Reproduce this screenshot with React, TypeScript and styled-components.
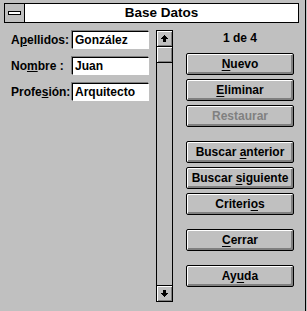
import React from "react";
import styled, { createGlobalStyle } from "styled-components";

const Global = createGlobalStyle`
  html, body { margin: 0; padding: 0; background: #c0c0c0; }
  body { font-family: "Liberation Sans", Arial, sans-serif; }
  * { box-sizing: border-box; }
`;

const Window = styled.div`
  width: 306px;
  height: 311px;
  background: #c0c0c0;
  border-right: 1px solid #000;
  display: flex;
  flex-direction: column;
  font-weight: bold;
  font-size: 12px;
  color: #000;
`;

const TitleBar = styled.div`
  margin: 3px 0 0 4px;
  width: 295px;
  height: 20px;
  border: 1px solid #000;
  display: flex;
`;

const SysMenu = styled.div`
  width: 20px;
  border-right: 1px solid #000;
  background: #c0c0c0;
  display: flex;
  align-items: center;
  justify-content: center;
`;

const SysDash = styled.div`
  width: 13px;
  height: 4px;
  background: #fff;
  border: 1px solid #000;
  margin-left: -1px;
`;

const Caption = styled.div`
  flex: 1;
  background: #fff;
  text-align: center;
  font-size: 13.5px;
  line-height: 18px;
`;

const Body = styled.div`
  flex: 1;
  display: flex;
  align-items: flex-start;
`;

const Fields = styled.div`
  width: 156px;
  padding: 8px 0 0 11px;
  display: flex;
  flex-direction: column;
  gap: 8px;
`;

const FieldRow = styled.div`
  display: flex;
  align-items: center;
  height: 18px;
`;

const Label = styled.span`
  width: 61px;
  white-space: nowrap;
`;

const Input = styled.div`
  width: 77px;
  height: 18px;
  background: #fff;
  border-top: 1px solid #000;
  border-left: 1px solid #000;
  border-right: 1px solid #fff;
  border-bottom: 1px solid #fff;
  box-shadow: -1px -1px 0 #808080;
  padding: 0 0 0 2px;
  line-height: 16px;
  white-space: nowrap;
  overflow: hidden;
`;

const ScrollBar = styled.div`
  margin-top: 7px;
  width: 17px;
  height: 272px;
  border: 1px solid #000;
  display: flex;
  flex-direction: column;
  background: #c0c0c0;
`;

const Raised = styled.div<{ $h: number; $bottom?: boolean }>`
  height: ${(p) => p.$h}px;
  flex-shrink: 0;
  background: #c0c0c0;
  ${(p) => (p.$bottom ? "border-top: 1px solid #000;" : "border-bottom: 1px solid #000;")}
  box-shadow: inset 1px 1px 0 #fff, inset -1px -1px 0 #808080;
  display: flex;
  align-items: center;
  justify-content: center;
`;

const Track = styled.div`
  flex: 1;
`;

const Actions = styled.div`
  margin-left: 13px;
  width: 108px;
  padding-top: 8px;
  display: flex;
  flex-direction: column;
  gap: 14px;
`;

const Counter = styled.div`
  height: 14px;
  line-height: 14px;
  text-align: center;
  margin-bottom: -6px;
`;

const Group = styled.div`
  display: flex;
  flex-direction: column;
  gap: 4px;
`;

const Button = styled.button<{ $disabled?: boolean }>`
  height: 22px;
  width: 108px;
  padding: 0 0 1px;
  margin: 0;
  background: #c0c0c0;
  border: 1px solid #000;
  border-radius: 2px;
  box-shadow: inset 1px 1px 0 #fff, inset -1px -1px 0 #808080, inset -2px -2px 0 #808080;
  font: inherit;
  font-weight: bold;
  font-size: 12px;
  color: ${(p) => (p.$disabled ? "#808080" : "#000")};
  text-align: center;
  white-space: nowrap;
  u { text-underline-offset: 2px; }
`;

const Arrow = ({ down }: { down?: boolean }) => (
  <svg width="9" height="9" viewBox="0 0 9 9" shapeRendering="crispEdges"
    style={{ transform: down ? "rotate(180deg)" : undefined }}>
    <path d="M4.5 1 L8 5 L6 5 L6 8 L3 8 L3 5 L1 5 Z" fill="#000" />
  </svg>
);

export default function App() {
  return (
    <>
      <Global />
      <Window>
        <TitleBar>
          <SysMenu><SysDash /></SysMenu>
          <Caption>Base Datos</Caption>
        </TitleBar>
        <Body>
          <Fields>
            <FieldRow><Label>A<u>p</u>ellidos:</Label><Input>González</Input></FieldRow>
            <FieldRow><Label>No<u>m</u>bre :</Label><Input>Juan</Input></FieldRow>
            <FieldRow><Label>Profe<u>s</u>ión:</Label><Input>Arquitecto</Input></FieldRow>
          </Fields>
          <ScrollBar>
            <Raised $h={16}><Arrow /></Raised>
            <Raised $h={16} />
            <Track />
            <Raised $h={16} $bottom><Arrow down /></Raised>
          </ScrollBar>
          <Actions>
            <Counter>1 de 4</Counter>
            <Group>
              <Button><u>N</u>uevo</Button>
              <Button><u>E</u>liminar</Button>
              <Button $disabled>Restaurar</Button>
            </Group>
            <Group>
              <Button>Buscar <u>a</u>nterior</Button>
              <Button>Buscar <u>s</u>iguiente</Button>
              <Button>Criteri<u>o</u>s</Button>
            </Group>
            <Group>
              <Button><u>C</u>errar</Button>
            </Group>
            <Group>
              <Button>Ay<u>u</u>da</Button>
            </Group>
          </Actions>
        </Body>
      </Window>
    </>
  );
}
